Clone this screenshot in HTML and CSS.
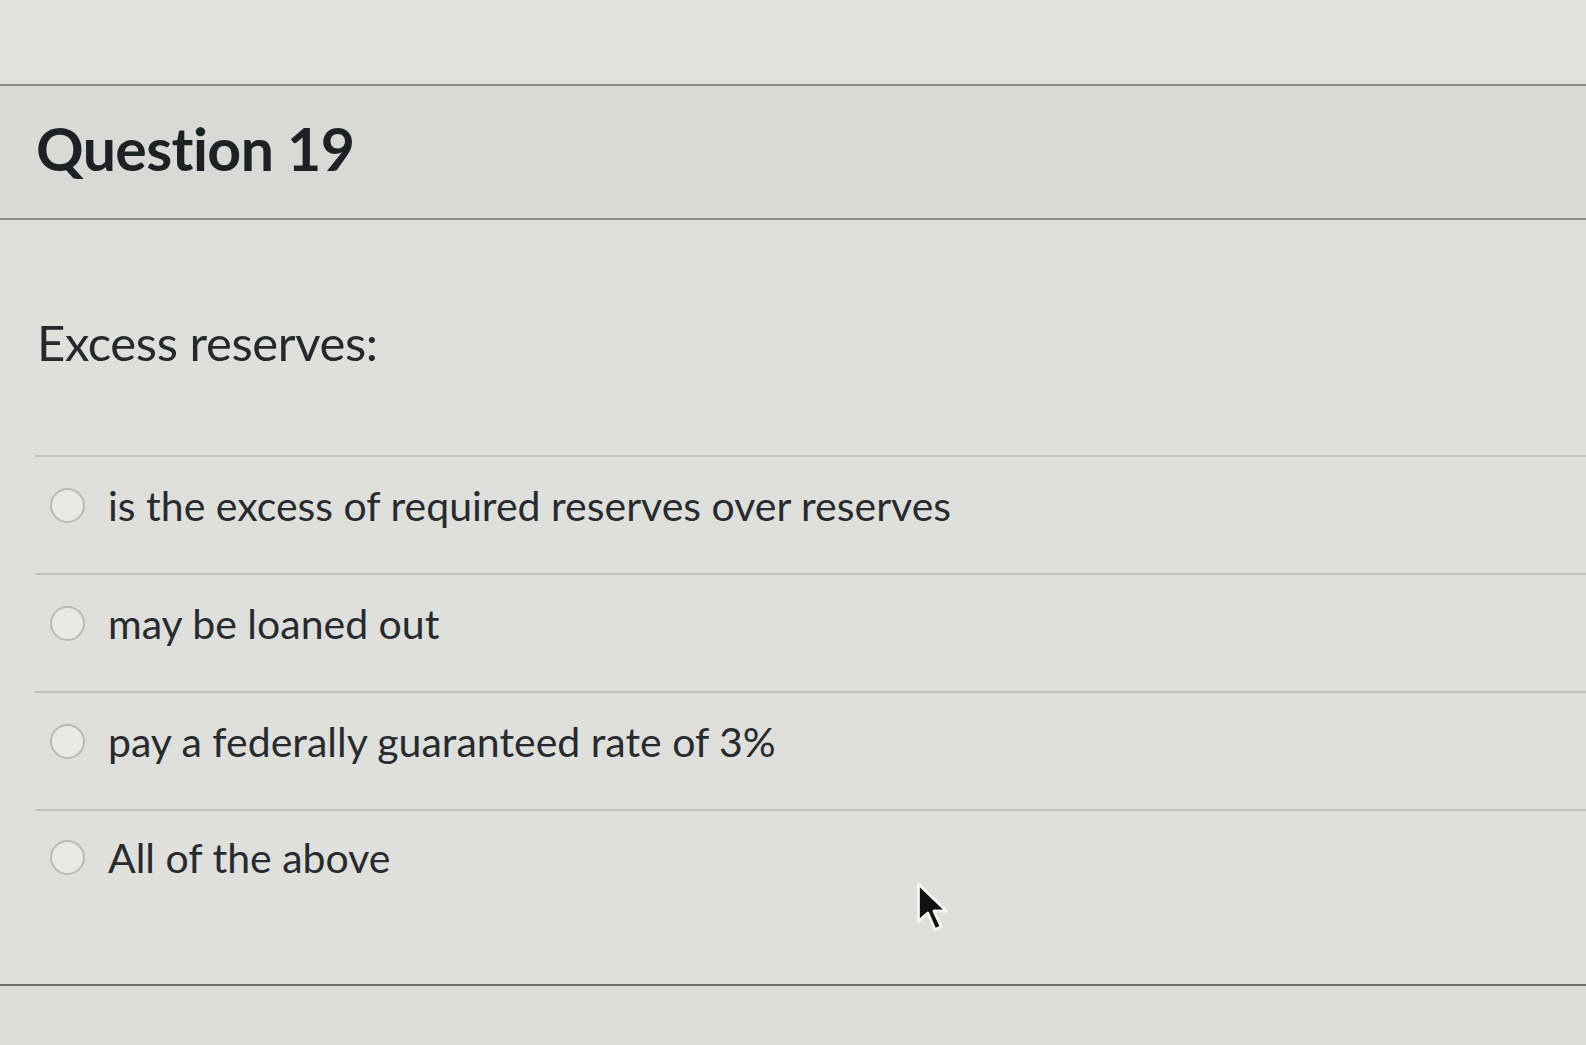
FILE: index.html
```html
<!DOCTYPE html>
<html>
<head>
<meta charset="utf-8">
<link rel="stylesheet" href="styles.css">
</head>
<body>
<div class="page">
  <div class="top"></div>
  <div class="header"><h1 class="title">Question 19</h1></div>
  <div class="body">
    <p class="prompt">Excess reserves:</p>
    <div class="answers">
      <label class="answer"><span class="radio"></span><span class="text">is the excess of required reserves over reserves</span></label>
      <label class="answer"><span class="radio"></span><span class="text">may be loaned out</span></label>
      <label class="answer"><span class="radio"></span><span class="text">pay a federally guaranteed rate of 3%</span></label>
      <label class="answer last"><span class="radio"></span><span class="text">All of the above</span></label>
    </div>
  </div>
  <div class="bottom"></div>
  <svg class="cursor" width="36" height="54" viewBox="0 0 17 26"><path d="M1 1 L1 19 L5.5 15 L9 23 L12 21.5 L8.5 14 L14.5 14 Z" fill="#111" stroke="#f4f4f0" stroke-width="1.4" stroke-linejoin="round"/></svg>
</div>
</body>
</html>
```
FILE: styles.css
```css
html, body {
  margin: 0;
  padding: 0;
}
body {
  background: #dedfdb;
  font-family: Lato, "Noto Sans", sans-serif;
  color: #24292d;
  width: 1586px;
  height: 1045px;
  overflow: hidden;
}
.page {
  position: relative;
  height: 1045px;
}
.top {
  height: 84px;
  background: #e1e2de;
}
.header {
  height: 132px;
  border-top: 2px solid #8e8f8d;
  border-bottom: 2px solid #8e8f8d;
  background: #d9dad6;
  display: flex;
  align-items: center;
  padding-left: 36px;
}
.title {
  margin: 0;
  font-size: 59px;
  font-weight: 700;
  color: #1d2024;
  letter-spacing: -0.6px;
  position: relative;
  top: -4px;
}
.body {
  padding-left: 35px;
  background: #dfe0dc;
}
.prompt {
  margin: 0;
  padding-top: 90px;
  font-size: 49px;
  line-height: 64px;
  padding-left: 2px;
  letter-spacing: -0.4px;
  color: #26292c;
  box-sizing: border-box;
  height: 235px;
}
.answers {
  border-top: 2px solid #c2c3bf;
}
.answer {
  display: flex;
  align-items: flex-start;
  height: 118px;
  border-bottom: 2px solid #c2c3bf;
  padding-left: 15px;
  padding-top: 24px;
  box-sizing: border-box;
}
.answer.last {
  border-bottom: none;
  height: 173px;
  padding-top: 22px;
}
.radio {
  width: 31px;
  height: 31px;
  border: 2px solid #b9bab7;
  border-radius: 50%;
  background: #e9eae6;
  flex: none;
  margin-right: 23px;
  margin-top: 7px;
}
.text {
  font-size: 41px;
  line-height: 50px;
  color: #272b2f;
}
.bottom {
  border-top: 2px solid #6f706e;
  height: 70px;
  background: #dcddd9;
}
.cursor {
  position: absolute;
  left: 916px;
  top: 882px;
}
```
